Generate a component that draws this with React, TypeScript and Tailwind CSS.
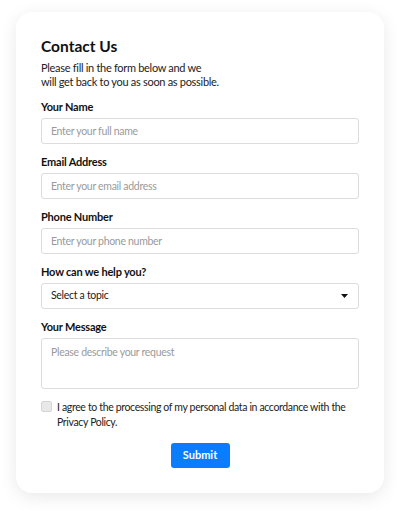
import { useState } from "react";

const inputCls =
  "block h-[26px] w-full rounded-[3px] border border-[#dcdcdc] bg-white px-[9px] py-0 text-[10.5px] tracking-[-0.3px] text-[#222] placeholder:text-[#9a9a9a] outline-none";

function Field({ label, children }: { label: string; children: React.ReactNode }) {
  return (
    <div className="flex flex-col gap-[4px]">
      <label className="text-[11px] font-bold leading-[14px] tracking-[-0.2px] text-[#111]">{label}</label>
      {children}
    </div>
  );
}

export default function App() {
  const [agree, setAgree] = useState(false);

  return (
    <div
      className="min-h-[511px] w-full bg-white px-[16px] pt-[12px]"
      style={{ fontFamily: 'Lato, "Noto Sans", sans-serif' }}
    >
      <div className="rounded-[16px] bg-white px-[25px] pb-[25px] pt-[24px] shadow-[0_4px_18px_rgba(0,0,0,0.09)]">
        <h1 className="text-[15.5px] font-bold leading-[21px] text-[#111]">Contact Us</h1>
        <p className="mt-[4px] text-[11px] leading-[14px] tracking-[-0.3px] text-[#222]">
          Please fill in the form below and we
          <br />
          will get back to you as soon as possible.
        </p>

        <form className="mt-[11px] flex flex-col gap-[11px]" onSubmit={(e) => e.preventDefault()}>
          <Field label="Your Name">
            <input className={inputCls} placeholder="Enter your full name" />
          </Field>
          <Field label="Email Address">
            <input className={inputCls} placeholder="Enter your email address" />
          </Field>
          <Field label="Phone Number">
            <input className={inputCls} placeholder="Enter your phone number" />
          </Field>
          <Field label="How can we help you?">
            <div className="relative h-[26px]">
              <select className={inputCls + " appearance-none text-[#222]"} defaultValue="">
                <option value="" disabled>
                  Select a topic
                </option>
                <option>General question</option>
                <option>Support</option>
              </select>
              <svg
                className="pointer-events-none absolute right-[11px] top-1/2 -translate-y-1/2"
                width="7"
                height="4"
                viewBox="0 0 7 4"
              >
                <path d="M0 0h7L3.5 4z" fill="#111" />
              </svg>
            </div>
          </Field>
          <Field label="Your Message">
            <textarea
              className="block h-[51px] w-full resize-none rounded-[3px] border border-[#dcdcdc] bg-white px-[9px] py-[6px] text-[10.5px] leading-[14px] tracking-[-0.3px] text-[#222] placeholder:text-[#9a9a9a] outline-none"
              placeholder="Please describe your request"
            />
          </Field>

          <label className="flex items-start gap-[5px]">
            <input
              type="checkbox"
              checked={agree}
              onChange={(e) => setAgree(e.target.checked)}
              className="mt-[1px] h-[11px] w-[11px] shrink-0 appearance-none rounded-[2px] border border-[#d6d6d6] bg-[#e8e8e8]"
            />
            <span className="text-[10.5px] leading-[15px] tracking-[-0.35px] text-[#222]">
              I agree to the processing of my personal data in accordance with the Privacy Policy.
            </span>
          </label>

          <div className="mt-[2px] flex justify-center">
            <button
              type="submit"
              className="h-[25px] w-[59px] rounded-[3px] bg-[#0a7cff] text-[11px] font-bold text-white"
            >
              Submit
            </button>
          </div>
        </form>
      </div>
    </div>
  );
}
